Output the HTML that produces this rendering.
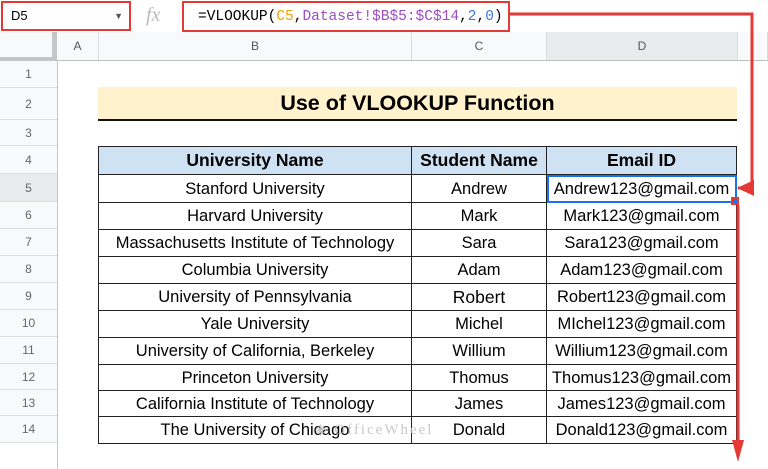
<!DOCTYPE html><html><head><style>
body{margin:0;width:768px;height:469px;background:#fff;font-family:"Liberation Sans",Arial,sans-serif;position:relative;overflow:hidden}
.a{position:absolute}
.rh{position:absolute;left:0;width:57px;background:#f8f9fa;border-bottom:1px solid #dadce0;color:#666;font-size:12px;text-align:center;box-sizing:border-box}
.ch{position:absolute;top:32px;height:29px;background:#f8f9fa;border-right:1px solid #dadce0;border-bottom:1px solid #c0c0c0;color:#555;font-size:12px;text-align:center;line-height:29px;box-sizing:border-box}
table{position:absolute;left:98px;top:146px;border-collapse:collapse;font-size:16.5px;color:#000;table-layout:fixed}
td{border:1.5px solid #222;text-align:center;padding:0;line-height:16px;white-space:nowrap;overflow:visible}
th{border:1.5px solid #222;background:#cfe2f3;font-size:17.5px;padding:0;white-space:nowrap}
</style></head><body>
<div class="a" style="left:0;top:0;width:768px;height:32px;background:#fff;border-bottom:1px solid #dadce0"></div>
<div class="a" style="left:1px;top:1px;height:26px;border:2.5px solid #e53935;font-size:13px;line-height:26px;padding-left:8px;width:118px">D5<span style="position:absolute;right:6px;top:0;font-size:9px;color:#555">▼</span></div>
<div class="a" style="left:146px;top:4px;font-family:'Liberation Serif',serif;font-style:italic;font-size:20px;color:#bbb">fx</div>
<div class="a" style="left:182px;top:1px;height:31px;border:2.5px solid #e53935;font-family:'Liberation Mono',monospace;font-size:14.5px;line-height:28px;padding-left:14px;box-sizing:border-box;width:328px;white-space:nowrap">=VLOOKUP(<span style="color:#f4a100">C5</span>,<span style="color:#9c4dbf">Dataset!$B$5:$C$14</span>,<span style="color:#3c78d8">2</span>,<span style="color:#3c78d8">0</span>)</div>
<div class="a" style="left:0;top:32px;width:57px;height:29px;background:#f8f9fa;border-right:5px solid #c6c6c6;border-bottom:4px solid #c6c6c6;box-sizing:border-box"></div>
<div class="ch" style="left:57px;width:42px">A</div>
<div class="ch" style="left:99px;width:313px">B</div>
<div class="ch" style="left:412px;width:135px">C</div>
<div class="ch" style="left:547px;width:191px;background:#e8eaed">D</div>
<div class="ch" style="left:738px;width:30px"></div>
<div class="a" style="left:57px;top:61px;width:1px;height:408px;background:#c6c6c6"></div>
<div class="rh" style="top:61px;height:27px;line-height:27px">1</div>
<div class="rh" style="top:88px;height:32px;line-height:32px">2</div>
<div class="rh" style="top:120px;height:26px;line-height:26px">3</div>
<div class="rh" style="top:146px;height:28px;line-height:28px">4</div>
<div class="rh" style="top:174px;height:28px;line-height:28px;background:#e8eaed">5</div>
<div class="rh" style="top:202px;height:27px;line-height:27px">6</div>
<div class="rh" style="top:229px;height:27px;line-height:27px">7</div>
<div class="rh" style="top:256px;height:27px;line-height:27px">8</div>
<div class="rh" style="top:283px;height:27px;line-height:27px">9</div>
<div class="rh" style="top:310px;height:27px;line-height:27px">10</div>
<div class="rh" style="top:337px;height:27px;line-height:27px">11</div>
<div class="rh" style="top:364px;height:26px;line-height:26px">12</div>
<div class="rh" style="top:390px;height:26px;line-height:26px">13</div>
<div class="rh" style="top:416px;height:27px;line-height:27px">14</div>
<div class="a" style="left:98px;top:87px;width:639px;height:32px;background:#fff2cc;border-bottom:2px solid #111;text-align:center;font-weight:bold;font-size:21.5px;line-height:33px">Use of VLOOKUP Function</div>
<table>
<colgroup><col style="width:313px"><col style="width:135px"><col style="width:190px"></colgroup>
<tr style="height:28px"><th>University Name</th><th>Student Name</th><th>Email ID</th></tr>
<tr style="height:28px"><td>Stanford University</td><td>Andrew</td><td style="outline:2px solid #1a73e8;outline-offset:-2px">Andrew123@gmail.com</td></tr>
<tr style="height:27px"><td>Harvard University</td><td>Mark</td><td>Mark123@gmail.com</td></tr>
<tr style="height:27px"><td>Massachusetts Institute of Technology</td><td>Sara</td><td>Sara123@gmail.com</td></tr>
<tr style="height:27px"><td>Columbia University</td><td>Adam</td><td>Adam123@gmail.com</td></tr>
<tr style="height:27px"><td>University of Pennsylvania</td><td style="font-size:17.5px">Robert</td><td>Robert123@gmail.com</td></tr>
<tr style="height:27px"><td>Yale University</td><td>Michel</td><td>MIchel123@gmail.com</td></tr>
<tr style="height:27px"><td>University of California, Berkeley</td><td>Willium</td><td>Willium123@gmail.com</td></tr>
<tr style="height:26px"><td>Princeton University</td><td>Thomus</td><td>Thomus123@gmail.com</td></tr>
<tr style="height:26px"><td>California Institute of Technology</td><td>James</td><td>James123@gmail.com</td></tr>
<tr style="height:27px"><td>The University of Chicago</td><td>Donald</td><td>Donald123@gmail.com</td></tr>
</table>
<div class="a" style="left:315px;top:420px;font-family:'Liberation Serif',serif;font-size:15px;color:#bbb;letter-spacing:2px;opacity:.8">◈ OfficeWheel</div>
<svg class="a" style="left:0;top:0" width="768" height="469">
<path d="M510 14 H752 V186" stroke="#e53935" stroke-width="3" fill="none"/>
<path d="M752 180 L752 188 L738 188" stroke="#e53935" stroke-width="3" fill="none"/>
<polygon points="737,188 754,180 754,196" fill="#e53935"/>
<rect x="731" y="197" width="8" height="8" fill="#e53935"/><rect x="733" y="199" width="4" height="4" fill="#1a73e8"/>
<line x1="738" y1="205" x2="738" y2="445" stroke="#e53935" stroke-width="3"/>
<polygon points="732,440 744,440 738,462" fill="#e53935"/>
</svg>
</body></html>
